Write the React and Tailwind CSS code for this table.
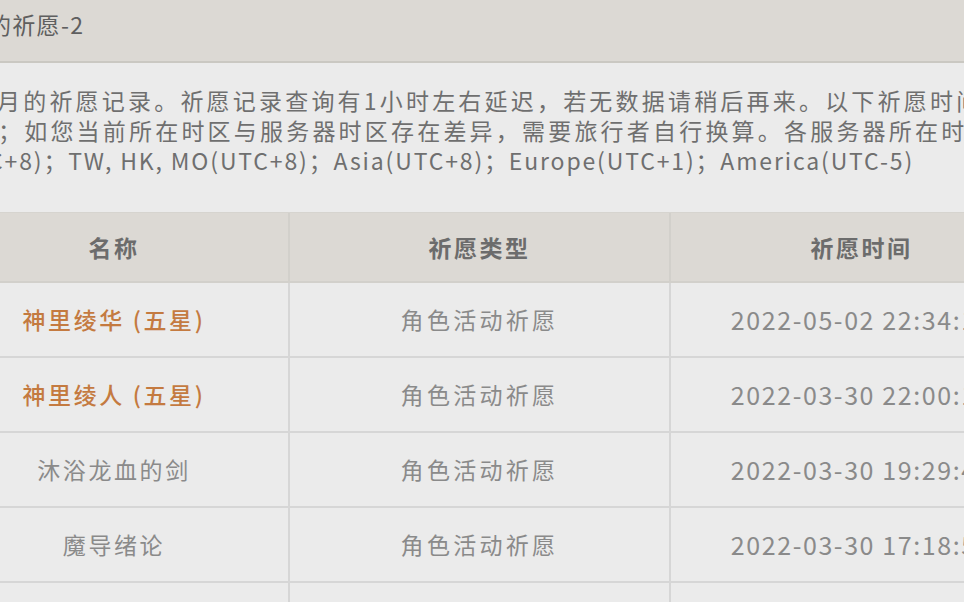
import React from "react";

const rows = [
  { name: "神里绫华 (五星)", star: true, type: "角色活动祈愿", time: "2022-05-02 22:34:12" },
  { name: "神里绫人 (五星)", star: true, type: "角色活动祈愿", time: "2022-03-30 22:00:15" },
  { name: "沐浴龙血的剑", star: false, type: "角色活动祈愿", time: "2022-03-30 19:29:43" },
  { name: "魔导绪论", star: false, type: "角色活动祈愿", time: "2022-03-30 17:18:56" },
  { name: "", star: false, type: "", time: "" },
];

export default function App() {
  return (
    <div className="w-[964px] h-[602px] overflow-hidden bg-[#ebebeb] font-['Noto_Sans_CJK_SC','Noto_Sans',sans-serif]">
      {/* title bar */}
      <div className="h-[63px] bg-[#dcd9d4] border-b-2 border-[#cac8c2] flex items-center">
        <div className="ml-[-12px] text-[23px] tracking-[1.3px] text-[#5f5f5f] whitespace-nowrap pb-[12px]">的祈愿-2</div>
      </div>

      {/* notice */}
      <div className="pt-[22px] text-[23px] leading-[30px] text-[#6f6f6f] whitespace-nowrap">
        <div className="ml-[-3px] tracking-[3.2px]">月的祈愿记录。祈愿记录查询有1小时左右延迟，若无数据请稍后再来。以下祈愿时间为</div>
        <div className="ml-[-2px] tracking-[3.2px]">；如您当前所在时区与服务器时区存在差异，需要旅行者自行换算。各服务器所在时区</div>
        <div className="ml-[-12px] tracking-[1.85px]">C+8)；TW, HK, MO(UTC+8)；Asia(UTC+8)；Europe(UTC+1)；America(UTC-5)</div>
      </div>

      {/* table */}
      <div className="mt-[37px] ml-[-60px] w-[1112px] border-t border-[#d6d4cf]">
        <div className="grid grid-cols-[350px_381px_381px] h-[70px] bg-[#dcd9d4] border-b-2 border-[#d2d0cb] text-[23px] font-semibold text-[#6c6c6c] tracking-[2.5px]">
          <div className="flex items-center justify-center border-r-2 border-[#d2d0cb]">名称</div>
          <div className="flex items-center justify-center border-r-2 border-[#d2d0cb]">祈愿类型</div>
          <div className="flex items-center justify-center">祈愿时间</div>
        </div>
        {rows.map((r, i) => (
          <div
            key={i}
            className="grid grid-cols-[350px_381px_381px] h-[75px] border-b-2 border-[#d6d6d6] text-[23px] text-[#8a8a8a] whitespace-nowrap"
          >
            <div className={`flex items-center justify-center border-r-2 border-[#d6d6d6] tracking-[2.6px] ${r.star ? "text-[#c47a40] font-medium" : ""}`}>
              {r.name}
            </div>
            <div className="flex items-center justify-center border-r-2 border-[#d6d6d6] tracking-[3.3px]">{r.type}</div>
            <div className="flex items-center justify-center text-[25px] tracking-[1.6px]">{r.time}</div>
          </div>
        ))}
      </div>
    </div>
  );
}
